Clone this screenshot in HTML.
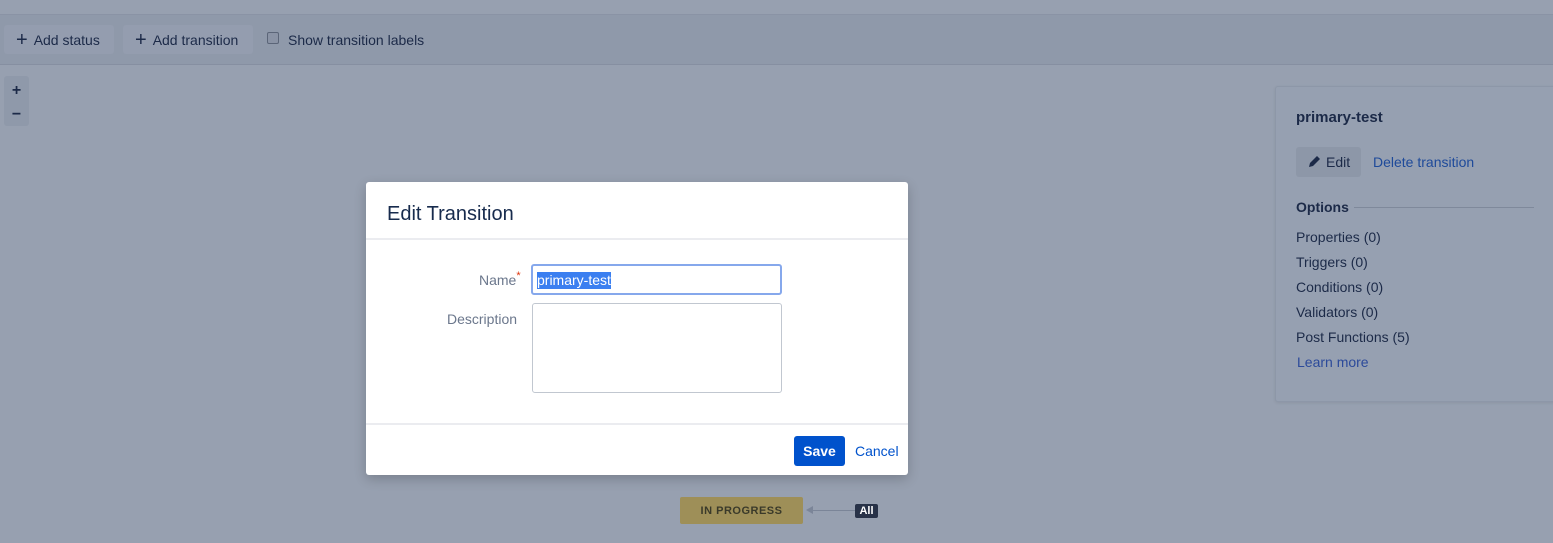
<!DOCTYPE html>
<html><head><style>
*{box-sizing:border-box;margin:0;padding:0}
body{width:1553px;height:543px;background:#97a0b0;font-family:"Liberation Sans",sans-serif;position:relative;overflow:hidden;color:#172b4d}
.topline{position:absolute;left:0;top:14px;width:1553px;height:1px;background:#8a93a5}
.toolbar{position:absolute;left:0;top:15px;width:1553px;height:50px;background:#8f99aa;border-bottom:1px solid #868fa1}
.btn{position:absolute;top:10px;height:29px;background:#949daf;border-radius:3px;font-size:14px;color:#1c2a48;line-height:29px;padding-left:12px}
.btn b{font-size:20px;font-weight:normal;margin-right:6px;position:relative;top:1px}
.zoom{position:absolute;left:4px;top:76px;width:25px;height:50px;background:#8f99aa;border-radius:3px;font-size:16px;text-align:center;color:#1c2a48;font-weight:bold;line-height:24px;padding-top:3px}
.panel{position:absolute;left:1275px;top:86px;width:290px;height:316px;background:#96a0b1;border:1px solid #8d97a8;border-radius:3px;box-shadow:0 1px 3px rgba(0,0,0,.08)}
.panel .t{position:absolute;left:20px;top:22px;font-size:15px;font-weight:bold;color:#1c2a48}
.edit{position:absolute;left:20px;top:60px;width:65px;height:30px;background:#8d97a8;border-radius:3px;font-size:14px;line-height:30px;padding-left:12px;color:#1c2a48}
.del{position:absolute;left:97px;top:67px;font-size:14px;color:#1e4a9a}
.opt{position:absolute;left:20px;top:112px;font-size:14px;font-weight:bold;color:#1c2a48}
.optline{position:absolute;left:78px;top:120px;width:180px;height:1px;background:#7f899b}
.li{position:absolute;left:20px;font-size:14px;color:#1c2a48}
.dlg{position:absolute;left:366px;top:182px;width:542px;height:293px;background:#fff;border-radius:3px;box-shadow:0 4px 12px rgba(0,0,0,.2)}
.dlg h2{position:absolute;left:21px;top:21px;font-size:20px;font-weight:normal;color:#172b4d}
.sep{position:absolute;left:0;width:542px;height:2px;background:#ebecf0}
.lbl{position:absolute;font-size:14px;color:#6b778c;text-align:right}
.inp{position:absolute;left:165px;top:82px;width:251px;height:31px;border:2px solid #86a8ec;border-radius:3px}
.inp span{position:absolute;left:4px;top:6px;background:#3b7ff0;color:#fff;font-size:14px;line-height:17px}
.ta{position:absolute;left:166px;top:121px;width:250px;height:90px;border:1px solid #c1c7d0;border-radius:3px}
.save{position:absolute;left:428px;top:254px;width:51px;height:30px;background:#0052cc;border-radius:3px;color:#fff;font-weight:bold;font-size:14px;text-align:center;line-height:30px}
.cancel{position:absolute;left:489px;top:261px;font-size:14px;color:#0052cc}
.ip{position:absolute;left:680px;top:497px;width:123px;height:27px;background:#9e8f58;border-radius:2px;font-size:11px;font-weight:bold;color:#3a3a2a;text-align:center;line-height:28px;letter-spacing:.5px}
.all{position:absolute;left:855px;top:504px;width:23px;height:14px;background:#283248;border-radius:2px;color:#fff;font-size:11px;font-weight:bold;text-align:center;line-height:14px}
.arr{position:absolute;left:812px;top:510px;width:44px;height:1px;background:#7b8598}
.ah{position:absolute;left:806px;top:506px;width:0;height:0;border-top:4px solid transparent;border-bottom:4px solid transparent;border-right:7px solid #7b8598}
</style></head><body>
<div class="topline"></div>
<div class="toolbar">
<div class="btn" style="left:4px;width:110px"><b>+</b>Add status</div>
<div class="btn" style="left:123px;width:130px"><b>+</b>Add transition</div>
<div style="position:absolute;left:267px;top:17px;width:12px;height:12px;border:1px solid #5b6578;border-radius:2px;background:#8a93a5"></div>
<div style="position:absolute;left:288px;top:17px;font-size:14px;color:#1c2a48">Show transition labels</div>
</div>
<div class="zoom">+<br>−</div>
<div class="panel">
<div class="t">primary-test</div>
<div class="edit"><svg width="13" height="13" viewBox="0 0 13 13" style="vertical-align:-1px;margin-right:5px"><path d="M1 12l1-4 7-7 3 3-7 7z" fill="#1c2a48"/></svg>Edit</div>
<div class="del">Delete transition</div>
<div class="opt">Options</div><div class="optline"></div>
<div class="li" style="top:142px">Properties (0)</div>
<div class="li" style="top:167px">Triggers (0)</div>
<div class="li" style="top:192px">Conditions (0)</div>
<div class="li" style="top:217px">Validators (0)</div>
<div class="li" style="top:242px">Post Functions (5)</div>
<div class="li" style="top:267px;left:21px;color:#2c4a9a">Learn more</div>
</div>
<div class="dlg">
<h2>Edit Transition</h2>
<div class="sep" style="top:56px"></div>
<div class="lbl" style="left:113px;top:90px">Name<span style="color:#de350b;font-size:11px;position:relative;top:-6px">*</span></div>
<div class="lbl" style="left:81px;top:129px">Description</div>
<div class="inp"><span>primary-test</span></div>
<div class="ta"></div>
<div class="sep" style="top:241px"></div>
<div class="save">Save</div>
<div class="cancel">Cancel</div>
</div>
<div class="ip">IN PROGRESS</div>
<div class="arr"></div><div class="ah"></div>
<div class="all">All</div>
</body></html>
